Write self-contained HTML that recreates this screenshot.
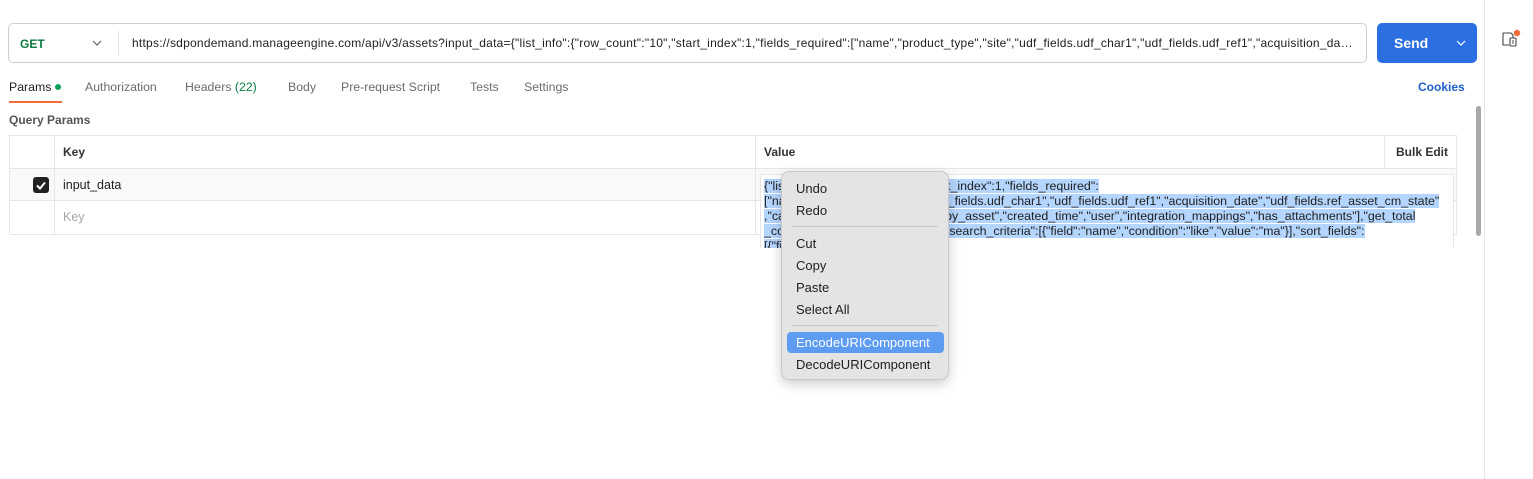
<!DOCTYPE html><html><head><style>
*{margin:0;padding:0;box-sizing:border-box}
body{width:1533px;height:479px;background:#fff;font-family:"Liberation Sans",sans-serif;color:#212121;position:relative;overflow:hidden;font-size:12px}
.a{position:absolute;white-space:nowrap}
.url{left:8px;top:23px;width:1359px;height:40px;border:1px solid #cfcfcf;border-radius:5px}
.tab{top:80px;font-size:12.3px;color:#6b6b6b}
.sel{background:#b4d5fe}
.mi{left:14px;font-size:13px;color:#1e1e1e}
</style></head><body>
<div class="a url"></div>
<div class="a" style="left:20px;top:37px;font-weight:bold;color:#0b7a3e;font-size:12px">GET</div>
<svg class="a" style="left:91px;top:39px" width="12" height="8"><path d="M2 2l4 4 4-4" stroke="#666" fill="none" stroke-width="1.2"/></svg>
<div class="a" style="left:118px;top:31px;width:1px;height:24px;background:#e0e0e0"></div>
<div class="a" style="left:132px;top:36px;font-size:12px;letter-spacing:0.24px;color:#212121;width:1230px;overflow:hidden">https://sdpondemand.manageengine.com/api/v3/assets?input_data={"list_info":{"row_count":"10","start_index":1,"fields_required":["name","product_type","site","udf_fields.udf_char1","udf_fields.udf_ref1","acquisition_da…</div>
<div class="a" style="left:1377px;top:23px;width:100px;height:40px;background:#2b6fe3;border-radius:5px"></div>
<div class="a" style="left:1394px;top:35px;color:#fff;font-size:14px;font-weight:bold">Send</div>
<svg class="a" style="left:1455px;top:39px" width="12" height="8"><path d="M2 2l4 4 4-4" stroke="#fff" fill="none" stroke-width="1.2"/></svg>
<div class="a" style="left:1484px;top:0;width:1px;height:479px;background:#e6e6e6"></div>
<svg class="a" style="left:1500px;top:28px" width="24" height="22"><path d="M3 5h8l2 2v3M3 5v12h6" stroke="#444" fill="none" stroke-width="1.1"/><rect x="10" y="10" width="6" height="8" rx="1" stroke="#444" fill="none" stroke-width="1.1"/><path d="M12 13h2M12 15h2" stroke="#444"/><circle cx="17" cy="5" r="3.2" fill="#f26b3a"/></svg>
<div class="a tab" style="left:9px;color:#212121">Params</div>
<div class="a" style="left:55px;top:84px;width:6px;height:6px;border-radius:3px;background:#0da058"></div>
<div class="a" style="left:9px;top:101px;width:53px;height:2px;background:#f26b3a"></div>
<div class="a tab" style="left:85px">Authorization</div>
<div class="a tab" style="left:185px">Headers <span style="color:#0b8043">(22)</span></div>
<div class="a tab" style="left:288px">Body</div>
<div class="a tab" style="left:341px">Pre-request Script</div>
<div class="a tab" style="left:470px">Tests</div>
<div class="a tab" style="left:524px">Settings</div>
<div class="a" style="left:1418px;top:80px;color:#1f5fcc;font-weight:bold;font-size:12px">Cookies</div>
<div class="a" style="left:9px;top:113px;color:#555;font-weight:bold;font-size:12px">Query Params</div>
<div class="a" style="left:1476px;top:106px;width:5px;height:130px;background:#a8a8a8;border-radius:3px"></div>
<div class="a" style="left:9px;top:135px;width:1448px;height:100px;border:1px solid #e6e6e6"></div>
<div class="a" style="left:10px;top:168px;width:1446px;height:33px;background:#f9f9f9;border-top:1px solid #e6e6e6;border-bottom:1px solid #e6e6e6"></div>
<div class="a" style="left:54px;top:136px;width:1px;height:98px;background:#e6e6e6"></div>
<div class="a" style="left:755px;top:136px;width:1px;height:98px;background:#e6e6e6"></div>
<div class="a" style="left:1384px;top:136px;width:1px;height:32px;background:#e6e6e6"></div>
<div class="a" style="left:63px;top:145px;color:#333;font-weight:bold;font-size:12px">Key</div>
<div class="a" style="left:764px;top:145px;color:#333;font-weight:bold;font-size:12px">Value</div>
<div class="a" style="left:1396px;top:145px;color:#333;font-weight:bold;font-size:12px">Bulk Edit</div>
<svg class="a" style="left:32px;top:176px" width="18" height="18"><rect x="1" y="1" width="16" height="16" rx="3" fill="#222"/><path d="M5 9.5l3 3 5-6" stroke="#fff" stroke-width="2" fill="none"/></svg>
<div class="a" style="left:63px;top:178px;font-size:12.5px">input_data</div>
<div class="a" style="left:63px;top:210px;font-size:12.5px;color:#a6a6a6">Key</div>
<div class="a" style="left:760px;top:174px;width:694px;height:74px;background:#fff;border:1px solid #e6e6e6;border-bottom:none;overflow:hidden;font-size:12.4px;line-height:15px;padding:4px 0 0 3px">
<div><span class="sel">{"list_info":{"row_count":"10","start_index":1,"fields_required":</span></div>
<div><span class="sel">["name","product_type","site","udf_fields.udf_char1","udf_fields.udf_ref1","acquisition_date","udf_fields.ref_asset_cm_state"</span></div>
<div><span class="sel">,"category","product","is_loaned_by_asset","created_time","user","integration_mappings","has_attachments"],"get_total</span></div>
<div><span class="sel">_count":true,"page":1,"mo":"asc","search_criteria":[{"field":"name","condition":"like","value":"ma"}],"sort_fields":</span></div>
<div><span class="sel">[{"field":"name","order":"desc"}]}}</span></div>
</div>
<div class="a" style="left:781px;top:171px;width:168px;height:209px;background:#e5e4e5;border:1px solid #c8c8c8;border-radius:8px;box-shadow:0 4px 12px rgba(0,0,0,.2)">
<div class="a mi" style="top:9px">Undo</div>
<div class="a mi" style="top:31px">Redo</div>
<div class="a" style="left:10px;top:54px;width:146px;height:1px;background:#c8c8c8"></div>
<div class="a mi" style="top:64px">Cut</div>
<div class="a mi" style="top:86px">Copy</div>
<div class="a mi" style="top:108px">Paste</div>
<div class="a mi" style="top:130px">Select All</div>
<div class="a" style="left:10px;top:153px;width:146px;height:1px;background:#c8c8c8"></div>
<div class="a" style="left:5px;top:160px;width:157px;height:21px;background:#5e9cf2;border-radius:4px"></div>
<div class="a mi" style="top:163px;color:#fff">EncodeURIComponent</div>
<div class="a mi" style="top:185px">DecodeURIComponent</div>
</div>
</body></html>
